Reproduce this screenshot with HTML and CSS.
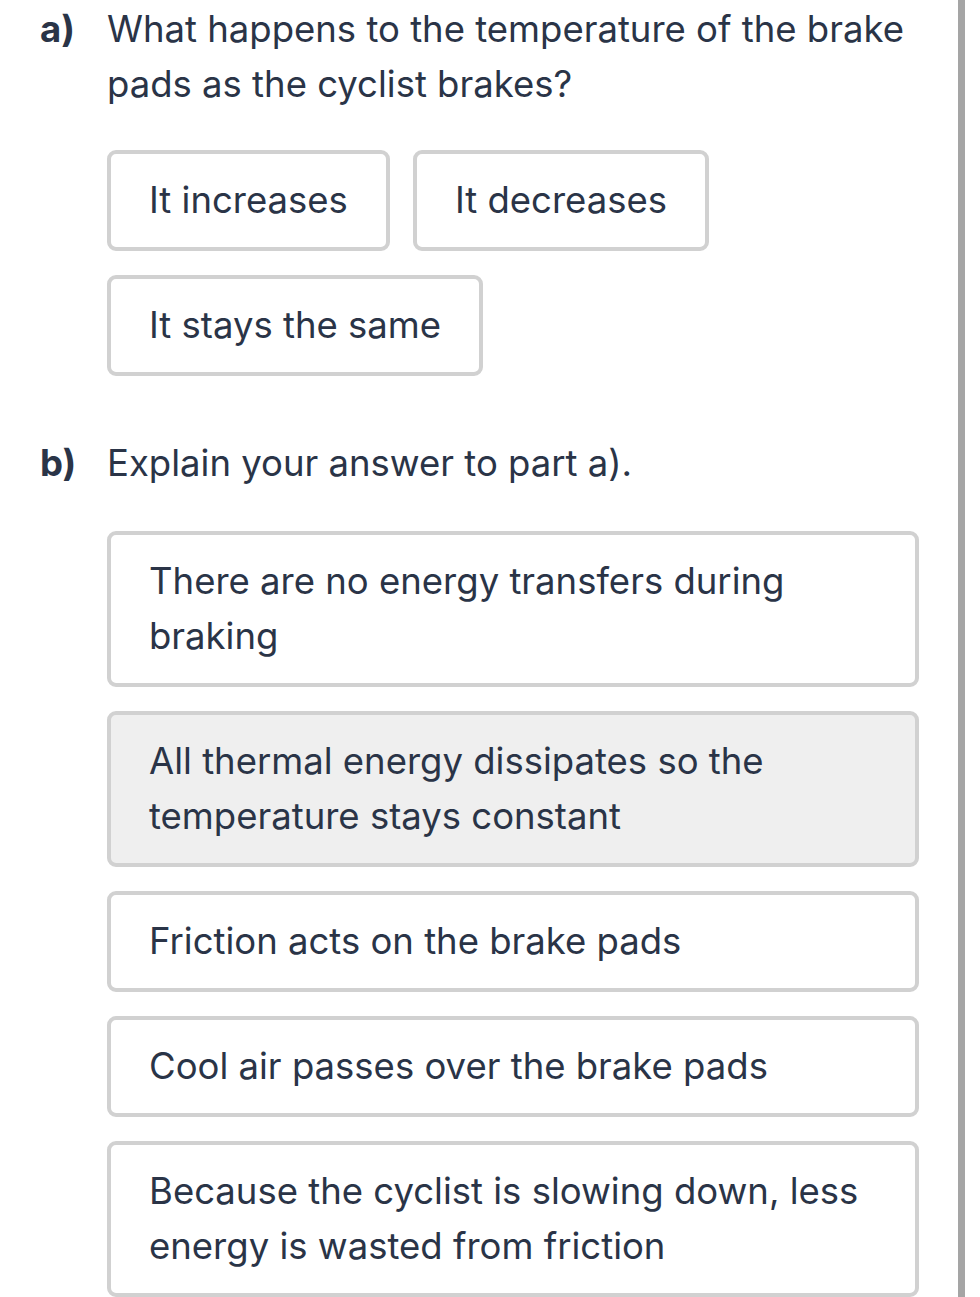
FILE: index.html
```html
<!DOCTYPE html>
<html lang="en">
<head>
<meta charset="utf-8">
<title>Brakes – heating question</title>
<link rel="stylesheet" href="styles.css">
</head>
<body>
<div class="page">
  <main class="sheet">
    <section class="part part-a">
      <div class="label">a)</div>
      <div class="body">
        <p class="prompt">What happens to the temperature of the brake pads as the cyclist brakes?</p>
        <div class="choices">
          <button class="choice" type="button">It increases</button>
          <button class="choice" type="button">It decreases</button>
          <button class="choice" type="button">It stays the same</button>
        </div>
      </div>
    </section>

    <section class="part part-b">
      <div class="label">b)</div>
      <div class="body">
        <p class="prompt">Explain your answer to part a).</p>
        <div class="answers">
          <button class="answer" type="button">There are no energy transfers during<br>braking</button>
          <button class="answer is-selected" type="button">All thermal energy dissipates so the<br>temperature stays constant</button>
          <button class="answer" type="button">Friction acts on the brake pads</button>
          <button class="answer" type="button">Cool air passes over the brake pads</button>
          <button class="answer" type="button">Because the cyclist is slowing down, less<br>energy is wasted from friction</button>
        </div>
      </div>
    </section>
  </main>
</div>
</body>
</html>
```

FILE: styles.css
```css
html, body {
  margin: 0;
  padding: 0;
  background: #ffffff;
}

body {
  font-family: "Inter", "Noto Sans", sans-serif;
  font-size: 36.5px;
  line-height: 55px;
  color: #2a3447;
}

.page {
  display: flex;
  min-height: 100vh;
}

/* content column with the grey rule down its right edge */
.sheet {
  width: 965px;
  box-sizing: border-box;
  padding: 2px 39px 40px 40px;
  border-right: 7px solid #a5a5a5;
}

.part {
  display: grid;
  grid-template-columns: 67px 1fr;
}

.part-b {
  margin-top: 60px;
}

.label {
  font-weight: 700;
}

.prompt {
  margin: 0;
}

.choices {
  margin-top: 38px;
  display: flex;
  flex-wrap: wrap;
  column-gap: 23px;
  row-gap: 24px;
}

.answers {
  margin-top: 40px;
  display: flex;
  flex-direction: column;
  gap: 24px;
}

.choice,
.answer {
  font: inherit;
  color: inherit;
  text-align: left;
  background: #ffffff;
  border: 4px solid #d1d1d1;
  border-radius: 9px;
  padding: 19px 38px;
  margin: 0;
  cursor: pointer;
}

.answer {
  width: 100%;
}

.answer.is-selected {
  background: #efefef;
}
```
